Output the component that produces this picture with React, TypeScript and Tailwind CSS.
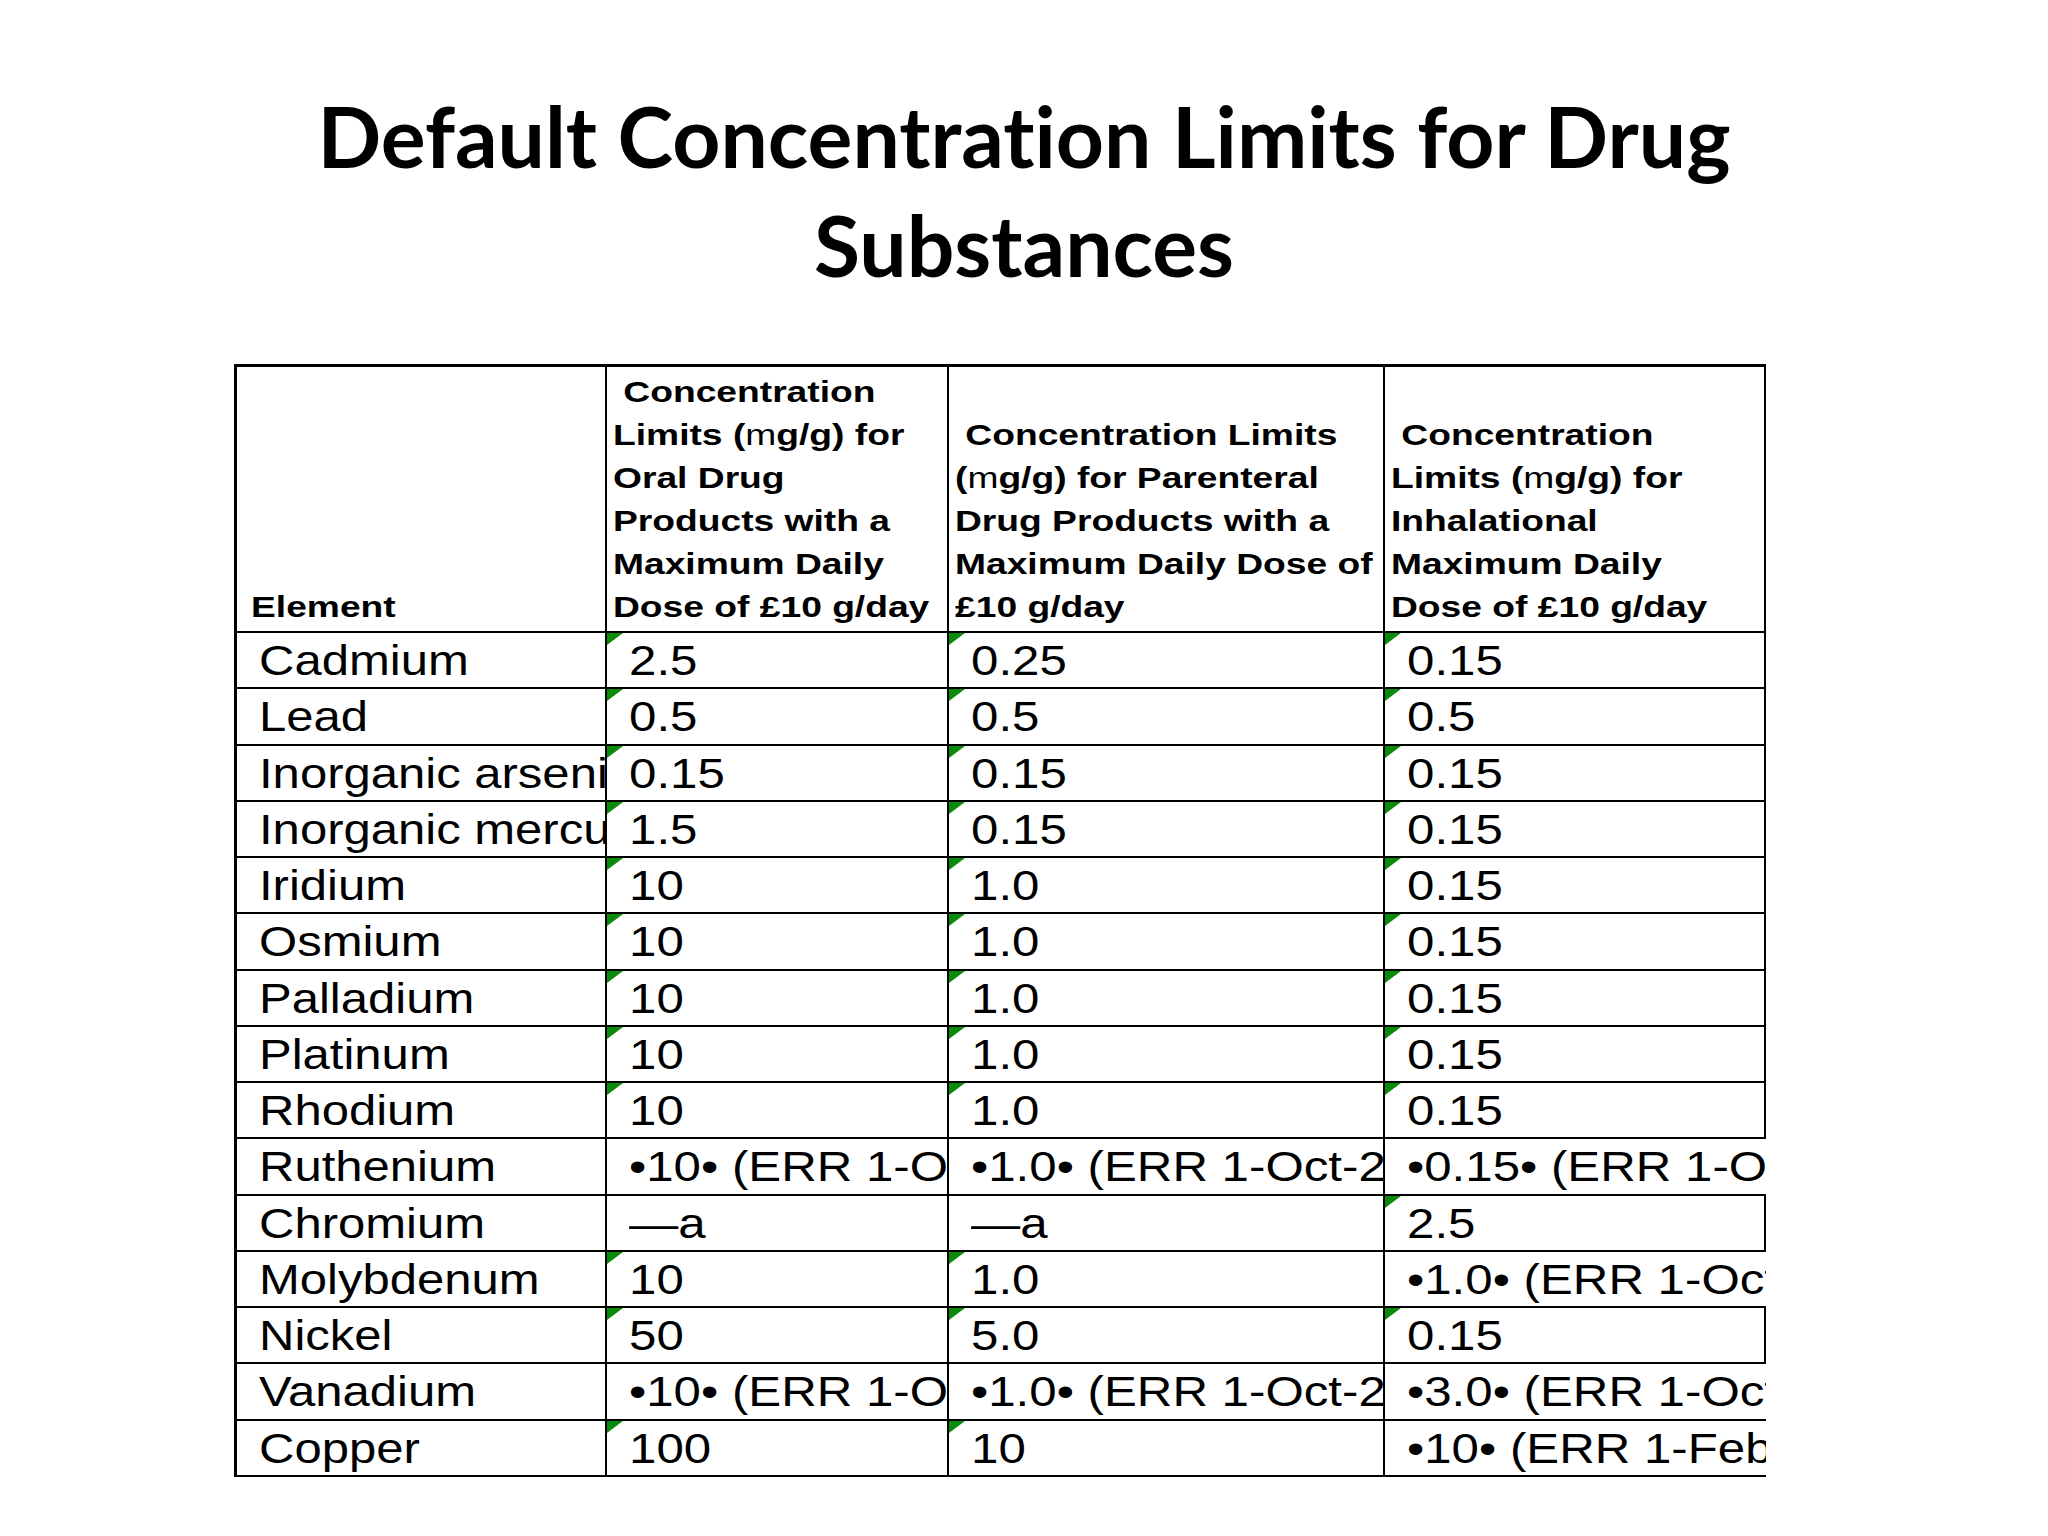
import React from 'react';

type Cell = { text: string; flag?: boolean };
type Row = { element: string; cells: Cell[]; openRight?: boolean };

const ok = (text: string): Cell => ({ text, flag: true });
const plain = (text: string): Cell => ({ text });

const rows: Row[] = [
  { element: 'Cadmium', cells: [ok('2.5'), ok('0.25'), ok('0.15')] },
  { element: 'Lead', cells: [ok('0.5'), ok('0.5'), ok('0.5')] },
  { element: 'Inorganic arsenic', cells: [ok('0.15'), ok('0.15'), ok('0.15')] },
  { element: 'Inorganic mercury', cells: [ok('1.5'), ok('0.15'), ok('0.15')] },
  { element: 'Iridium', cells: [ok('10'), ok('1.0'), ok('0.15')] },
  { element: 'Osmium', cells: [ok('10'), ok('1.0'), ok('0.15')] },
  { element: 'Palladium', cells: [ok('10'), ok('1.0'), ok('0.15')] },
  { element: 'Platinum', cells: [ok('10'), ok('1.0'), ok('0.15')] },
  { element: 'Rhodium', cells: [ok('10'), ok('1.0'), ok('0.15')] },
  {
    element: 'Ruthenium',
    cells: [plain('•10• (ERR 1-Oct-2010)'), plain('•1.0• (ERR 1-Oct-2010)'), plain('•0.15• (ERR 1-Oct-2010)')],
    openRight: true,
  },
  { element: 'Chromium', cells: [plain('—a'), plain('—a'), ok('2.5')] },
  { element: 'Molybdenum', cells: [ok('10'), ok('1.0'), plain('•1.0• (ERR 1-Oct-2010)')], openRight: true },
  { element: 'Nickel', cells: [ok('50'), ok('5.0'), ok('0.15')] },
  {
    element: 'Vanadium',
    cells: [plain('•10• (ERR 1-Oct-2010)'), plain('•1.0• (ERR 1-Oct-2010)'), plain('•3.0• (ERR 1-Oct-2010)')],
    openRight: true,
  },
  { element: 'Copper', cells: [ok('100'), ok('10'), plain('•10• (ERR 1-Feb-2011)')], openRight: true },
];

// widths of the value columns, border included
const colWidths = ['w-[342px]', 'w-[436px]', 'w-[381px]'];

function Flag() {
  return (
    <svg className="absolute left-0 top-0" width="16" height="12" viewBox="0 0 16 12">
      <polygon points="0,0 16,0 0,12" fill="#0a8a0a" />
    </svg>
  );
}

function Mu() {
  return <span className="font-normal">m</span>;
}

function HeaderLines({ lines }: { lines: React.ReactNode[] }) {
  return (
    <div className="inline-block origin-left scale-x-[1.24]">
      {lines.map((line, i) => (
        <div key={i} className="whitespace-nowrap">
          {line}
        </div>
      ))}
    </div>
  );
}

export default function App() {
  return (
    <div className="min-h-screen bg-white text-black">
      <h1 className="pt-[81px] text-center font-['Lato',sans-serif] text-[84px] font-bold leading-[109px] [font-variant-ligatures:none]">
        Default Concentration Limits for Drug
        <br />
        Substances
      </h1>

      <div className="ml-[234px] mt-[65px] w-[1532px] border-l-[3px] border-t-[3px] border-black font-['Liberation_Sans',Arial,sans-serif]">
        {/* header */}
        <div className="flex h-[266px] text-[30px] font-bold leading-[43px]">
          <div className="flex w-[370px] flex-col justify-end border-b-2 border-r-2 border-black pb-[3px] pl-[14px]">
            <HeaderLines lines={['Element']} />
          </div>
          <div className="flex w-[342px] flex-col justify-end border-b-2 border-r-2 border-black pb-[3px] pl-[6px]">
            <HeaderLines
              lines={[
                '\u00a0Concentration',
                <>Limits (<Mu />g/g) for</>,
                'Oral Drug',
                'Products with a',
                'Maximum Daily',
                'Dose of £10 g/day',
              ]}
            />
          </div>
          <div className="flex w-[436px] flex-col justify-end border-b-2 border-r-2 border-black pb-[3px] pl-[6px]">
            <HeaderLines
              lines={[
                '\u00a0Concentration Limits',
                <>(<Mu />g/g) for Parenteral</>,
                'Drug Products with a',
                'Maximum Daily Dose of',
                '£10 g/day',
              ]}
            />
          </div>
          <div className="flex w-[381px] flex-col justify-end border-b-2 border-r-2 border-black pb-[3px] pl-[6px]">
            <HeaderLines
              lines={[
                '\u00a0Concentration',
                <>Limits (<Mu />g/g) for</>,
                'Inhalational',
                'Maximum Daily',
                'Dose of £10 g/day',
              ]}
            />
          </div>
        </div>

        {/* body */}
        {rows.map((row) => (
          <div key={row.element} className="flex h-[56.27px] text-[43px] leading-[54px]">
            <div className="w-[370px] overflow-hidden whitespace-nowrap border-b-2 border-r-2 border-black pl-[22px]">
              <span className="inline-block origin-left scale-x-[1.14]">{row.element}</span>
            </div>
            {row.cells.map((cell, i) => {
              const last = i === row.cells.length - 1;
              return (
                <div
                  key={i}
                  className={`relative overflow-hidden whitespace-nowrap border-b-2 border-black pl-[22px] ${colWidths[i]} ${
                    last && row.openRight ? 'border-r-0' : 'border-r-2'
                  }`}
                >
                  {cell.flag && <Flag />}
                  <span className="inline-block origin-left scale-x-[1.145]">{cell.text}</span>
                </div>
              );
            })}
          </div>
        ))}
      </div>
    </div>
  );
}
